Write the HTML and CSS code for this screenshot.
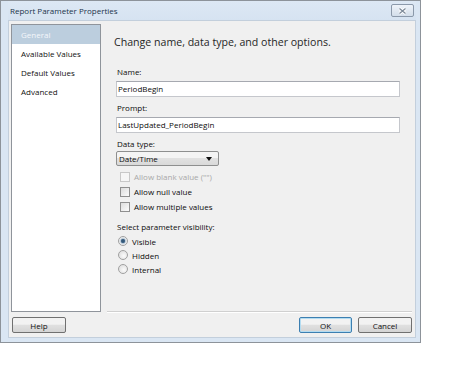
FILE: index.html
```html
<!DOCTYPE html>
<html lang="en">
<head>
    <meta charset="UTF-8">
    <title>Report Parameter Properties</title>
    <link rel="stylesheet" href="styles.css">
</head>
<body>

    <div class="window">
        <!-- Title bar -->
        <div class="titlebar">
            <span class="title">Report Parameter Properties</span>
            <span class="close">
                <svg width="11" height="8" viewBox="0 0 11 8">
                    <path d="M2.5 1.5 L8.5 6.5 M8.5 1.5 L2.5 6.5" stroke="#ffffff" stroke-width="3" fill="none"/>
                    <path d="M2.5 1.5 L8.5 6.5 M8.5 1.5 L2.5 6.5" stroke="#7d8a99" stroke-width="1.3" fill="none"/>
                </svg>
            </span>
        </div>

        <div class="client">
            <!-- Pages list -->
            <ul class="nav">
                <li class="active">General</li>
                <li>Available Values</li>
                <li>Default Values</li>
                <li>Advanced</li>
            </ul>

            <!-- General page -->
            <div class="page">
                <h1>Change name, data type, and other options.</h1>

                <div class="form">
                    <div class="field-label first">Name:</div>
                    <div class="textbox">PeriodBegin</div>

                    <div class="field-label">Prompt:</div>
                    <div class="textbox">LastUpdated_PeriodBegin</div>

                    <div class="field-label">Data type:</div>
                    <div class="combo">
                        <span>Date/Time</span>
                        <span class="arrow"></span>
                    </div>

                    <div class="checks">
                        <div class="check disabled"><span class="box"></span>Allow blank value ("")</div>
                        <div class="check"><span class="box"></span>Allow null value</div>
                        <div class="check"><span class="box"></span>Allow multiple values</div>
                    </div>

                    <div class="field-label vis">Select parameter visibility:</div>
                    <div class="radios">
                        <div class="radio checked"><span class="dot"></span>Visible</div>
                        <div class="radio"><span class="dot"></span>Hidden</div>
                        <div class="radio"><span class="dot"></span>Internal</div>
                    </div>
                </div>
            </div>

            <!-- Buttons -->
            <div class="footer">
                <button class="btn">Help</button>
                <span class="spacer"></span>
                <button class="btn default">OK</button>
                <button class="btn">Cancel</button>
            </div>
        </div>
    </div>

</body>
</html>
```

FILE: styles.css
```css
/* Page */
body {
    margin: 0;
    background: #ffffff;
    font-family: 'Open Sans', 'Noto Sans', sans-serif;
    font-size: 8px;
    color: #0c0c0c;
}

/* Window frame */
.window {
    width: 421px;
    height: 343px;
    box-sizing: border-box;
    border: 1px solid #8d939a;
    background: #dae6f3;
    display: flex;
    flex-direction: column;
    padding: 0 4px 4px 7px;
}

.titlebar {
    height: 19px;
    display: flex;
    align-items: flex-start;
    background: linear-gradient(#dde8f4, #d6e3f1);
}

.title {
    margin: 4px 0 0 2px;
    font-size: 8px;
    line-height: 12px;
    color: #22344a;
}

.close {
    margin: 3px 2px 0 auto;
    width: 23px;
    height: 13px;
    box-sizing: border-box;
    border: 1px solid #8b99aa;
    border-radius: 2px;
    background: linear-gradient(#eef3f9, #d3deea);
    display: flex;
    align-items: center;
    justify-content: center;
}

/* Client area */
.client {
    flex: 1;
    background: #f0f0f0;
    border: 1px solid #c3cfdc;
    padding: 3px 3px 4px 2px;
    display: grid;
    grid-template-columns: 90px 1fr;
    grid-template-rows: 1fr auto;
    column-gap: 6px;
}

/* Left list */
.nav {
    list-style: none;
    margin: 0;
    padding: 0;
    background: #ffffff;
    border: 1px solid #8f949b;
}

.nav li {
    height: 19px;
    line-height: 19px;
    padding-left: 9px;
    color: #111;
}

.nav li.active {
    background: #bccede;
    color: #f4f7fb;
}

/* Right page */
.page {
    padding-left: 7px;
    border-bottom: 1px solid #d0d0d0;
    box-shadow: 0 1px 0 #ffffff;
}

h1 {
    margin: 10px 0 0;
    font-size: 10.6px;
    line-height: 16px;
    font-weight: normal;
    color: #262626;
}

.form {
    margin-left: 2px;
}

.field-label {
    margin-top: 5px;
    padding-left: 1px;
    line-height: 12px;
}

.field-label.first {
    margin-top: 16px;
}

.field-label.vis {
    margin-top: 7px;
}

.textbox {
    margin-top: 3px;
    width: 284px;
    height: 16px;
    box-sizing: border-box;
    border: 1px solid #c5c7cc;
    border-top-color: #a6a9b0;
    background: #ffffff;
    padding-left: 1px;
    line-height: 14px;
}

.combo {
    margin-top: 1px;
    width: 103px;
    height: 15px;
    box-sizing: border-box;
    border: 1px solid #8e8f8f;
    border-radius: 2px;
    background: linear-gradient(#f4f4f4 45%, #e1e1e1 50%, #d9d9d9);
    display: flex;
    align-items: center;
    padding: 0 6px 0 2px;
    line-height: 13px;
}

.arrow {
    margin-left: auto;
    width: 0;
    height: 0;
    border-left: 3px solid transparent;
    border-right: 3px solid transparent;
    border-top: 4px solid #111;
}

/* Check boxes */
.checks {
    margin-top: 3px;
}

.check {
    height: 15px;
    display: flex;
    align-items: center;
    padding-left: 4px;
}

.check .box {
    width: 10px;
    height: 10px;
    box-sizing: border-box;
    border: 1px solid #8f8f8f;
    background: linear-gradient(135deg, #dcdcdc, #fbfbfb);
    margin-right: 4px;
}

.check.disabled {
    color: #a8a8a8;
}

.check.disabled .box {
    border-color: #c8c8c8;
    background: #f6f6f6;
}

/* Radio buttons */
.radios {
    margin-top: 1px;
}

.radio {
    height: 14px;
    display: flex;
    align-items: center;
    padding-left: 2px;
}

.radio .dot {
    width: 10px;
    height: 10px;
    box-sizing: border-box;
    border: 1px solid #a0a0a0;
    border-radius: 50%;
    background: radial-gradient(circle at 60% 60%, #fbfbfb, #d8d8d8);
    margin-right: 4px;
}

.radio.checked .dot {
    background: radial-gradient(circle, #2b4d6b 0, #456a8c 1.8px, #c9d4de 2.6px, #f4f4f4 4px);
}

/* Dialog buttons */
.footer {
    grid-column: 1 / 3;
    margin-top: 5px;
    padding-left: 1px;
    display: flex;
    gap: 6px;
}

.spacer {
    flex: 1;
}

.btn {
    width: 54px;
    height: 16px;
    box-sizing: border-box;
    padding: 0;
    border: 1px solid #707070;
    border-radius: 2px;
    background: linear-gradient(#f2f2f2 45%, #e0e0e0 50%, #d4d4d4);
    font-family: 'Open Sans', 'Noto Sans', sans-serif;
    font-size: 8px;
    color: #111;
    line-height: 13px;
}

.btn.default {
    width: 53px;
    border-color: #3c7fb1;
    box-shadow: inset 0 0 0 1px #b4dcf1;
}
```
